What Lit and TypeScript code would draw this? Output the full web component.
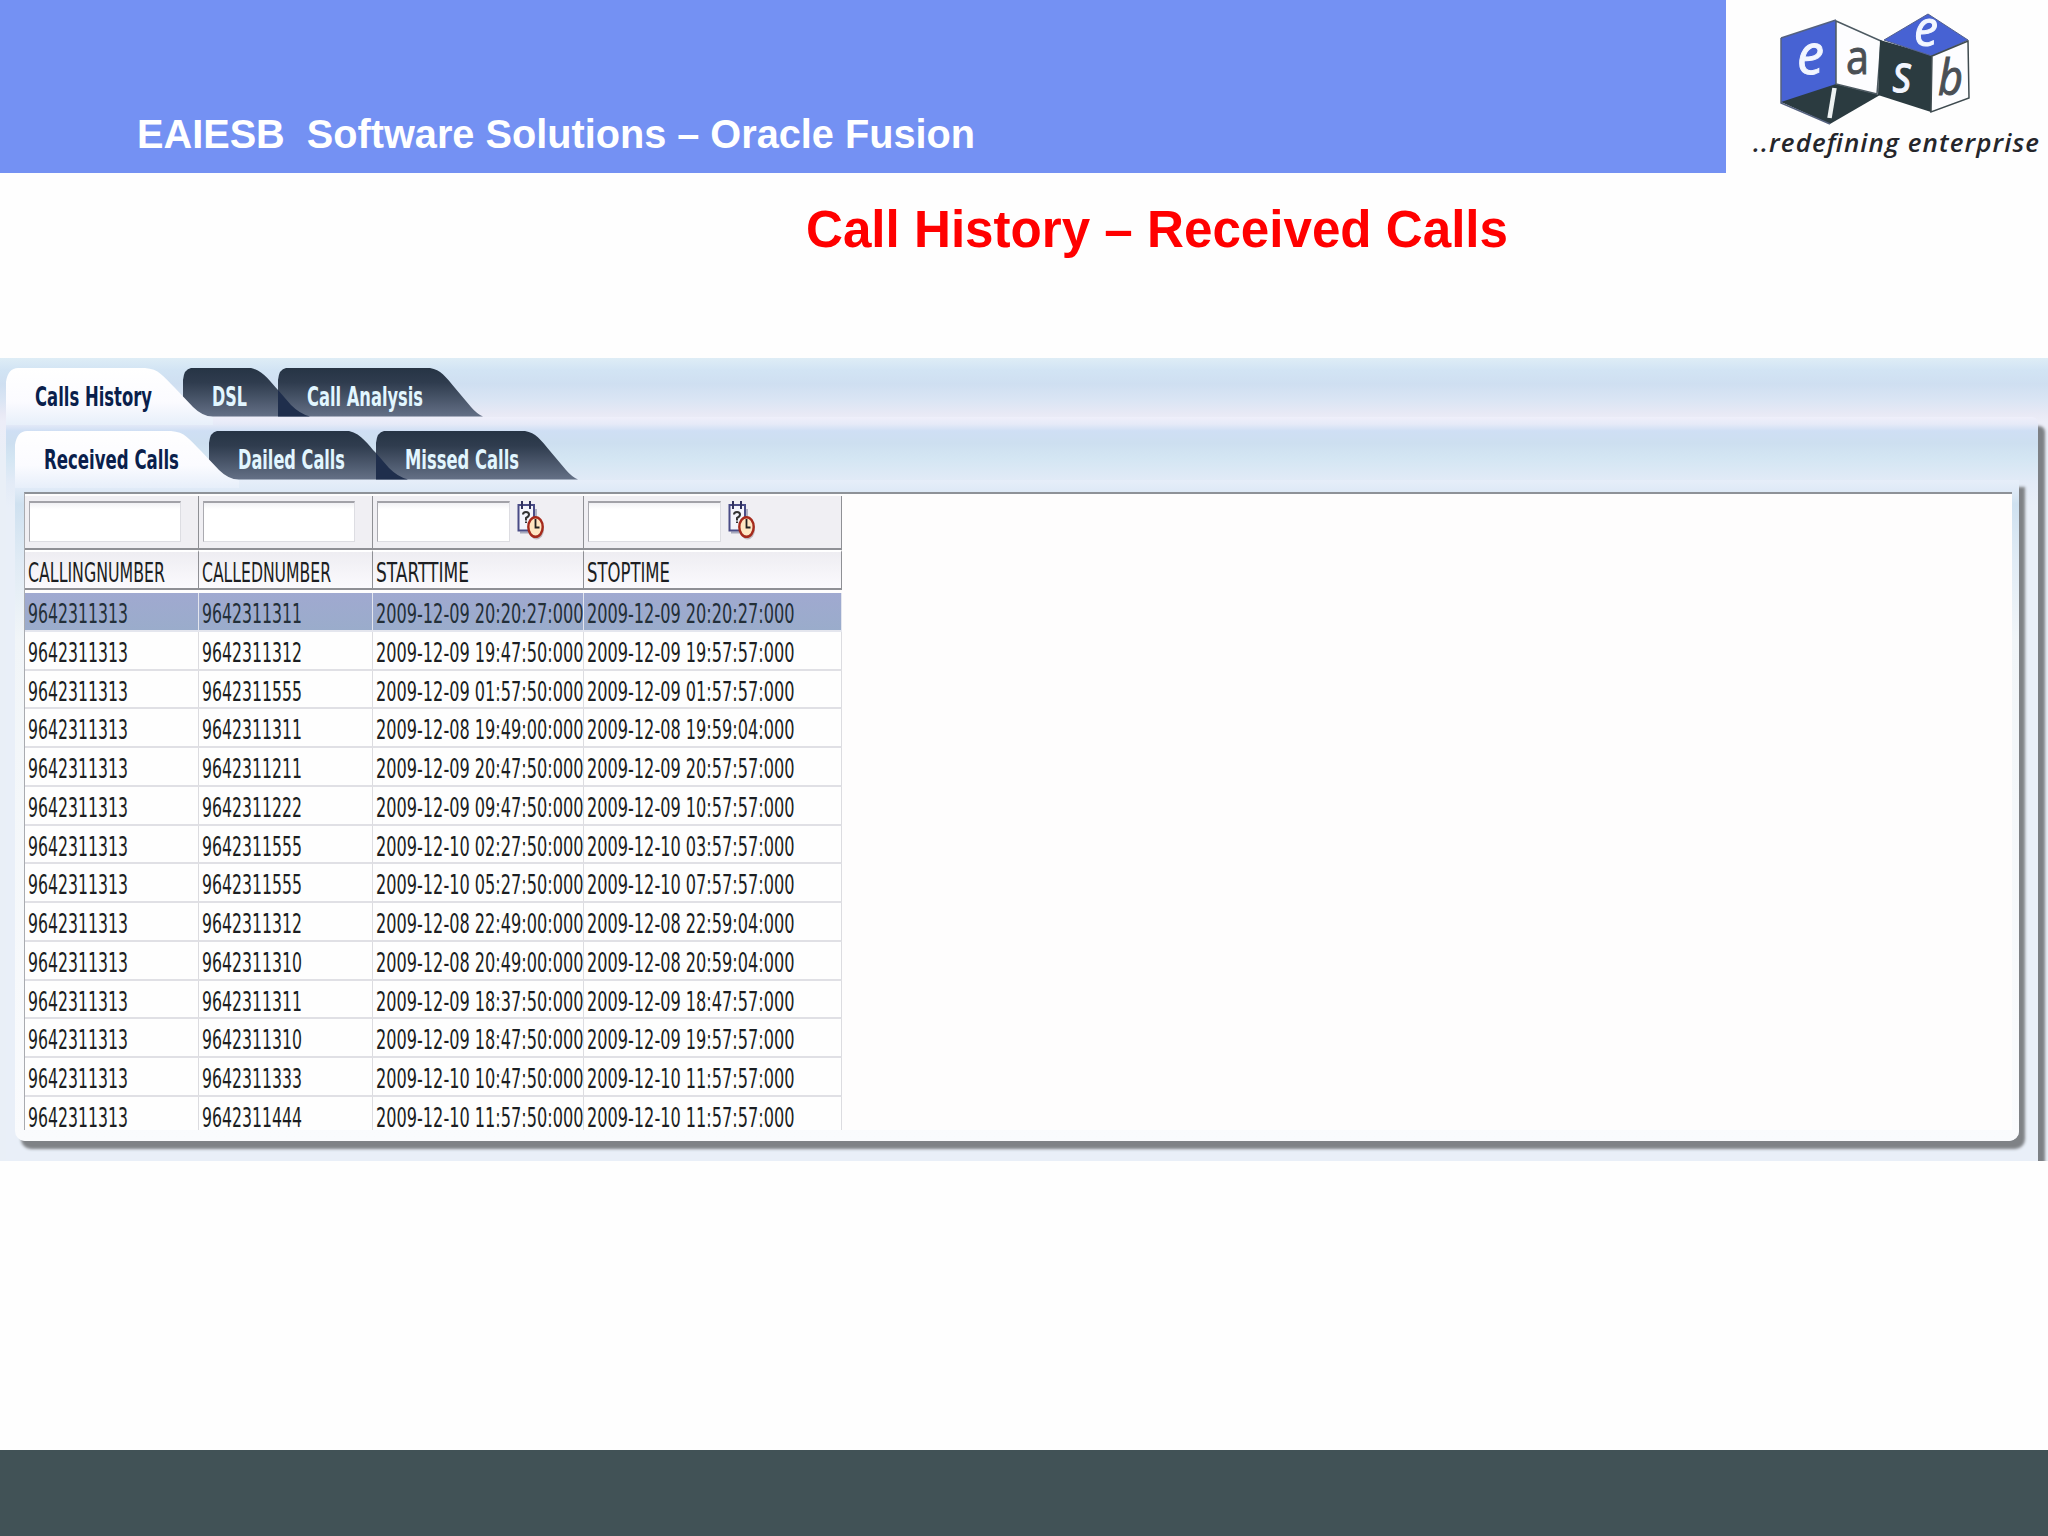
import { LitElement, html, svg, css } from "lit";
import { customElement, property } from "lit/decorators.js";

const NUMBERS = ["9642311311","9642311312","9642311555","9642311311","9642311211","9642311222","9642311555","9642311555","9642311312","9642311310","9642311311","9642311310","9642311333","9642311444"];
const TIMES: [string, string][] = [
  ["2009-12-09 20:20:27:000", "2009-12-09 20:20:27:000"],
  ["2009-12-09 19:47:50:000", "2009-12-09 19:57:57:000"],
  ["2009-12-09 01:57:50:000", "2009-12-09 01:57:57:000"],
  ["2009-12-08 19:49:00:000", "2009-12-08 19:59:04:000"],
  ["2009-12-09 20:47:50:000", "2009-12-09 20:57:57:000"],
  ["2009-12-09 09:47:50:000", "2009-12-09 10:57:57:000"],
  ["2009-12-10 02:27:50:000", "2009-12-10 03:57:57:000"],
  ["2009-12-10 05:27:50:000", "2009-12-10 07:57:57:000"],
  ["2009-12-08 22:49:00:000", "2009-12-08 22:59:04:000"],
  ["2009-12-08 20:49:00:000", "2009-12-08 20:59:04:000"],
  ["2009-12-09 18:37:50:000", "2009-12-09 18:47:57:000"],
  ["2009-12-09 18:47:50:000", "2009-12-09 19:57:57:000"],
  ["2009-12-10 10:47:50:000", "2009-12-10 11:57:57:000"],
  ["2009-12-10 11:57:50:000", "2009-12-10 11:57:57:000"],
];

/** One line of text set to an exact width. */
@customElement("fit-text")
class FitText extends LitElement {
  @property() text = "";
  @property({ type: Number }) w = 100;
  @property({ type: Number }) h = 36;
  @property({ type: Number }) base = 28;
  static styles = css`
    :host { display: block; flex: none; }
    svg { display: block; overflow: visible; }
    text { fill: currentColor; white-space: pre; }
  `;
  render() {
    return html`<svg width=${this.w} height=${this.h}>
      <text x="0" y=${this.base} textLength=${this.w} lengthAdjust="spacingAndGlyphs">${this.text}</text>
    </svg>`;
  }
}

/** Slanted tab; the shape flows out over the tab on its right. */
@customElement("slant-tab")
class SlantTab extends LitElement {
  @property() label = "";
  @property({ type: Number }) w = 100;
  @property({ type: Number }) tw = 80;
  @property({ type: Boolean, reflect: true }) active = false;
  @property({ type: Boolean }) joined = false;
  @property({ type: Boolean }) last = false;
  static styles = css`
    :host { display: block; flex: none; position: relative; height: 49px; z-index: 1; color: #e2f6ff; }
    :host([active]) { z-index: 2; color: #0a1f4c; }
    .shape { display: block; overflow: visible; }
    fit-text { position: absolute; left: 29px; top: 9px; font: bold 26px "DejaVu Sans Condensed", "DejaVu Sans", sans-serif; }
  `;
  render() {
    const w = this.w;
    const top = this.active
      ? `M0,57 V14 Q2,0 12,0 H${w - 38} C${w - 24},1 ${w - 20},8 ${w - 8},20 L${w + 10},39 Q${w + 19},48 ${w + 30},49 V57 Z`
      : this.last
      ? `M0,48.5 V12 Q1,1 8,0 H${w - 53} C${w - 42},2 ${w - 38},8 ${w - 28},20 L${w - 12},39 Q${w - 6},46 ${w},48.5 Z`
      : `M0,48.5 V12 Q1,1 8,0 H${w - 27} C${w - 14},3 ${w - 8},14 ${w},22 V48.5 Z`;
    return html`<svg class="shape" width=${w} height="49">
        <defs>
          <linearGradient id="on" x1="0" y1="0" x2="0" y2="1"><stop offset="0" stop-color="#fff"/><stop offset=".6" stop-color="#fbfbff"/><stop offset="1" stop-color="#e7effa"/></linearGradient>
          <linearGradient id="off" x1="0" y1="0" x2="0" y2="1"><stop offset="0" stop-color="#263445"/><stop offset=".3" stop-color="#2f3c4e"/><stop offset="1" stop-color="#647086"/></linearGradient>
        </defs>
        <path d=${top} fill=${this.active ? "url(#on)" : "url(#off)"}></path>
        ${this.joined ? svg`<path d="M0,22 L13,37 Q22,46 32,48.5 H0 Z" fill="#1f2e4c"></path>` : ""}
      </svg>
      <fit-text .text=${this.label} .w=${this.tw} .h=${36} .base=${29}></fit-text>`;
  }
}

@customElement("date-icon")
class DateIcon extends LitElement {
  static styles = css`:host { display: block; flex: none; } svg { display: block; }`;
  render() {
    return html`<svg width="28" height="40" viewBox="0 0 28 40">
      <path d="M3,31.500 H13 M19,8 V16" stroke="#a7a9bd" stroke-width="1.800"/>
      <rect x="1.500" y="4" width="15.500" height="25.500" fill="#f4f5fc" stroke="#4a4c86" stroke-width="2"/>
      <path d="M5,0 V8 M13,0 V8" stroke="#30325e" stroke-width="2"/>
      <path d="M6,13.500 Q6,11 9,11 Q12,11 12,13.500 Q12,15.500 9,17 V19.500 M9,20.500 V22" fill="none" stroke="#333" stroke-width="2"/>
      <ellipse cx="19.500" cy="28.500" rx="7.500" ry="10" fill="#8d7f87" opacity=".5"/>
      <ellipse cx="18.500" cy="26" rx="7.200" ry="9.800" fill="#ffe7c2" stroke="#a52a1c" stroke-width="2.400"/>
      <path d="M18.500,18 V26.500 H22.500" fill="none" stroke="#222" stroke-width="1.800"/>
    </svg>`;
  }
}

@customElement("app-root")
class AppRoot extends LitElement {
  static styles = css`
    :host { display: block; width: 2048px; height: 1536px; background: #fefefe; overflow: hidden; }
    .page { display: flex; flex-direction: column; height: 1536px; }
    .head { display: flex; height: 173px; flex: none; }
    .bar { width: 1726px; background: #7491f3; color: #fff; box-sizing: border-box; padding: 100px 0 0 137px; }
    .bar fit-text { font: bold 40px "Liberation Sans", Arial, sans-serif; }
    .logo { display: block; }
    .titlebar { height: 185px; flex: none; box-sizing: border-box; padding: 25px 0 0 806px; color: #f00; }
    .titlebar fit-text { font: bold 51px "Liberation Sans", Arial, sans-serif; }
    .outer { height: 803px; flex: none; display: flex; flex-direction: column; overflow: hidden;
      background: linear-gradient(#deedf6 0, #d2e4f4 12px, #cfdff1 26px, #dae5f4 42px, #e8e9f5 56px, #ecedf8 64px, #e9eff7 100px, #e9eff7 100%); }
    .tabs { display: flex; flex: none; height: 49px; }
    .t1 { padding: 10px 0 0 6px; }
    .p1 { width: 2032px; margin-left: 6px; flex: 1; display: flex; flex-direction: column; position: relative;
      border-radius: 0 6px 0 0; box-shadow: 7px 9px 3px 0 #7c8085;
      background: linear-gradient(#efeffa 0, #e6eaf8 7px, #cfdff4 14px, #cddff0 26px, #d4e6f3 42px, #e3ebf7 66px, #e9eff8 90px, #e9eff8 100%); }
    .t2 { padding: 14px 0 0 9px; }
    .p2 { width: 2004px; height: 661px; flex: none; margin-left: 9px; box-sizing: border-box; position: relative;
      padding: 12px 7px 0 9px; border-radius: 0 0 10px 10px; box-shadow: 6px 7.500px 3px 0 #7f8286;
      background: linear-gradient(#e6eef9 0, #dfeaf7 10px, #cfe1f0 24px, #e0ebf5 80px, #f1f5f8 160px, #fafbfd 100%); }
    .content { height: 638px; box-sizing: border-box; background: #fefdfd; border-top: 2px solid #8e9298; border-left: 1px solid #a9abb0; padding-top: 2px; overflow: hidden; }
    .grid { display: grid; grid-template-columns: 174px 174px 211px 258px; width: 817px; }
    .cell { box-sizing: border-box; display: flex; font: 26.500px "DejaVu Sans Condensed", "DejaVu Sans", sans-serif; color: #1c1e22; padding-left: 3px; }
    .filter { height: 54px; border-right: 1px solid #8f9095; border-bottom: 2px solid #8f9095; background: #f0eff3; padding: 5px 0 0 4px; }
    .input { flex: none; box-sizing: border-box; height: 41px; width: 152px; border: 1px solid #dddde2; border-top: 2px solid #a2a2a8; border-left: 1px solid #aaaab0; background: linear-gradient(#f1f1f4, #fff 6px); }
    .narrow { width: 133px; margin-right: 7px; }
    .name { height: 40px; border-top: 2px solid #fff; border-right: 1px solid #8f9095; border-bottom: 2px solid #8f9095; background: linear-gradient(#eeedf2, #fbfafd); }
    .rows { padding-top: 3px; }
    .data { height: 38.780px; border-right: 1px solid #dcdce0; border-bottom: 2px solid #e0e0e5; background: #fefefe; }
    .sel .cell { background: linear-gradient(#a0a9d0, #9aaccb); color: #232f38; border-color: #e4e6ee; }
    .gap { flex: 1; }
    .foot { height: 86px; flex: none; background: #415256; }
    .t { font-family: "Open Sans", "Noto Sans", sans-serif; }
    .light { fill: #f2f6ff; stroke: #f2f6ff; stroke-width: 1; font-style: italic; }
    .dark { fill: #4a4f55; stroke: #4a4f55; stroke-width: 1; }
    .slant { font-style: italic; }
  `;
  private cell(text: string, w: number) {
    return html`<div class="cell data"><fit-text .text=${text} .w=${w} .h=${36} .base=${29.5}></fit-text></div>`;
  }
  private name(text: string, w: number) {
    return html`<div class="cell name"><fit-text .text=${text} .w=${w} .h=${36} .base=${29.5}></fit-text></div>`;
  }
  render() {
    return html`<div class="page">
      <div class="head">
        <div class="bar"><fit-text .text=${"EAIESB\u00a0 Software Solutions – Oracle Fusion"} .w=${838} .h=${60} .base=${47.5}></fit-text></div>
        <svg class="logo" width="322" height="173" viewBox="1726 0 322 173">
          <path d="M1781,38 L1836,20 L1836,86 L1781,103 Z" fill="#4762d3"/>
          <path d="M1781,102 L1836,84 L1880,95 L1830,124 Z" fill="#2b3b40"/>
          <path d="M1836,21 L1881,41 L1877,94 L1836,84 Z" fill="#fdfdff" stroke="#4d5a62" stroke-width="1.500"/>
          <path d="M1880,40 L1932,55 L1931,112 L1878,95 Z" fill="#2b3b40"/>
          <path d="M1884,40 L1928,14 L1968,40 L1932,56 Z" fill="#4762d3" stroke="#54618c" stroke-width="1"/>
          <path d="M1932,56 L1968,41 L1969,98 L1931,112 Z" fill="#fdfdff" stroke="#3f4b50" stroke-width="1.500"/>
          <path d="M1781,38 V103 L1830,124 M1781,38 L1836,20" fill="none" stroke="#55627f" stroke-width="1.500"/>
          <g class="t">
            <text class="light" x="1797" y="74" font-size="57" textLength="27" lengthAdjust="spacingAndGlyphs">e</text>
            <text class="dark" x="1846" y="74" font-size="48" textLength="23" lengthAdjust="spacingAndGlyphs">a</text>
            <text class="light" x="1893" y="92" font-size="51" textLength="19" lengthAdjust="spacingAndGlyphs">s</text>
            <text class="light" x="1914" y="46" font-size="49" textLength="24" lengthAdjust="spacingAndGlyphs">e</text>
            <text class="dark slant" x="1938" y="95" font-size="49" textLength="25" lengthAdjust="spacingAndGlyphs">b</text>
            <path d="M1834.500,88 L1829.500,118" stroke="#eef2f2" stroke-width="4.500"/>
            <text x="1753" y="152" font-size="26" textLength="286" lengthAdjust="spacing" fill="#25262b" font-style="italic" font-weight="600">..redefining enterprise</text>
          </g>
        </svg>
      </div>
      <div class="titlebar"><fit-text .text=${"Call History – Received Calls"} .w=${702} .h=${70} .base=${48.5}></fit-text></div>
      <div class="outer">
        <div class="tabs t1">
          <slant-tab active .label=${"Calls History"} .w=${177} .tw=${117}></slant-tab>
          <slant-tab .label=${"DSL"} .w=${95} .tw=${35}></slant-tab>
          <slant-tab joined last .label=${"Call Analysis"} .w=${205} .tw=${116}></slant-tab>
        </div>
        <div class="p1">
          <div class="tabs t2">
            <slant-tab active .label=${"Received Calls"} .w=${194} .tw=${135}></slant-tab>
            <slant-tab .label=${"Dailed Calls"} .w=${167} .tw=${107}></slant-tab>
            <slant-tab joined last .label=${"Missed Calls"} .w=${202} .tw=${114}></slant-tab>
          </div>
          <div class="p2"><div class="content">
            <div class="grid">
              <div class="cell filter"><div class="input"></div></div>
              <div class="cell filter"><div class="input"></div></div>
              <div class="cell filter"><div class="input narrow"></div><date-icon></date-icon></div>
              <div class="cell filter"><div class="input narrow"></div><date-icon></date-icon></div>
              ${this.name("CALLINGNUMBER", 137)}${this.name("CALLEDNUMBER", 129)}${this.name("STARTTIME", 93)}${this.name("STOPTIME", 83)}
            </div>
            <div class="rows">${NUMBERS.map((n, i) => html`<div class="grid ${i === 0 ? "sel" : ""}">
              ${this.cell("9642311313", 100)}${this.cell(n, 100)}${this.cell(TIMES[i][0], 207.5)}${this.cell(TIMES[i][1], 207.5)}
            </div>`)}</div>
          </div></div>
        </div>
      </div>
      <div class="gap"></div>
      <div class="foot"></div>
    </div>`;
  }
}
